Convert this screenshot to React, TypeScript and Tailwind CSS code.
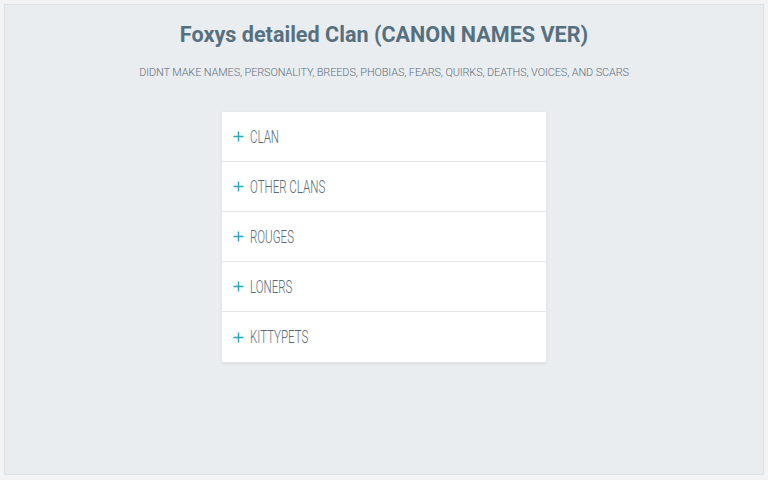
import React from 'react';

const sections = ['CLAN', 'OTHER CLANS', 'ROUGES', 'LONERS', 'KITTYPETS'];

function PlusIcon() {
  return (
    <svg width="11" height="11" viewBox="0 0 11 11" className="shrink-0">
      <path d="M5.5 0.5v10M0.5 5.5h10" stroke="#2aa7b8" strokeWidth="1.4" />
    </svg>
  );
}

export default function App() {
  return (
    <div className="w-[768px] h-[480px] bg-[#f3f3f3] p-[4px] pb-[5px]" style={{ fontFamily: 'Roboto, "Liberation Sans", sans-serif' }}>
      <div className="h-full border border-[#dde1e4] bg-[#e9edf0] flex flex-col items-center">
        {/* header */}
        <h1 className="mt-[15px] text-[21.6px] leading-[30px] font-bold text-[#56707f]">
          Foxys detailed Clan (CANON NAMES VER)
        </h1>
        <p className="mt-[16px] text-[10.9px] leading-[14px] font-light text-[#5d6f7a] uppercase tracking-[-0.1px]">
          Didnt make names, personality, breeds, phobias, fears, quirks, deaths, voices, and scars
        </p>

        {/* accordion */}
        <div className="mt-[31px] w-[326px] bg-white rounded-[2px] shadow-[0_1px_2px_rgba(0,0,0,0.08)] border border-[#e6e9eb]">
          {sections.map((s, i) => (
            <button
              key={s}
              className={`w-full h-[50px] flex items-center gap-[6px] pl-[11px] text-left ${i < sections.length - 1 ? 'border-b border-[#e2e6e9]' : ''}`}
            >
              <PlusIcon />
              <span className="text-[18px] leading-[20px] font-light text-[#5a6b76] inline-block origin-left scale-x-[0.64] whitespace-nowrap">
                {s}
              </span>
            </button>
          ))}
        </div>
      </div>
    </div>
  );
}
